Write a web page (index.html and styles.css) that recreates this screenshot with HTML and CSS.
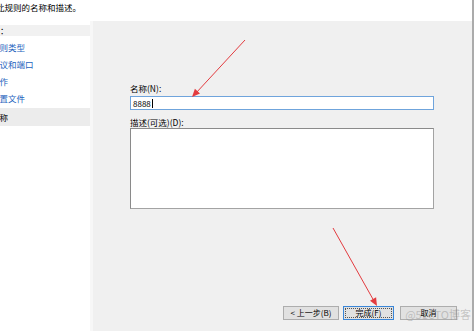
FILE: index.html
```html
<!DOCTYPE html>
<html lang="zh-CN">
<head>
<meta charset="utf-8">
<title>新建入站规则向导 - 名称</title>
<link rel="stylesheet" href="styles.css">
</head>
<body>
<div class="window">
  <div class="header"><span class="header-text">指定此规则的名称和描述。</span></div>
  <div class="main">
    <nav class="sidebar">
      <div class="steps-title">步骤：</div>
      <ul class="steps">
        <li class="step">规则类型</li>
        <li class="step">协议和端口</li>
        <li class="step">操作</li>
        <li class="step">配置文件</li>
        <li class="step current">名称</li>
      </ul>
    </nav>
    <section class="content">
      <div class="form">
        <div class="label">名称(N):</div>
        <div class="name-input"><span class="value">8888</span><span class="caret"></span></div>
        <div class="label label-desc">描述(可选)(D):</div>
        <div class="desc"></div>
      </div>
      <div class="footer">
        <button class="btn btn-back">&lt; 上一步(B)</button>
        <button class="btn btn-primary">完成(F)</button>
        <button class="btn btn-cancel">取消</button>
      </div>
    </section>
  </div>
</div>
<div class="edge"></div>
<span class="watermark">@51CTO博客</span>
<svg class="arrows" width="474" height="331" viewBox="0 0 474 331">
  <line x1="245" y1="40" x2="196" y2="93" stroke="#e33b3f" stroke-width="1"/>
  <polygon points="192,97 200,93.5 194.9,88.8" fill="#e33b3f"/>
  <line x1="333" y1="228" x2="374" y2="301" stroke="#e33b3f" stroke-width="1"/>
  <polygon points="377,306 370,300.8 376.1,297.3" fill="#e33b3f"/>
</svg>
</body>
</html>
```
FILE: styles.css
```css
* {
  box-sizing: border-box;
  margin: 0;
  padding: 0;
}

body {
  width: 474px;
  height: 331px;
  overflow: hidden;
  position: relative;
  display: flex;
  background: #f0f0f0;
  font-family: "Noto Sans CJK SC", "Noto Sans", sans-serif;
  font-size: 8.5px;
  color: #000000;
}

.window {
  width: 472px;
  height: 331px;
  display: flex;
  flex-direction: column;
}

.edge {
  width: 2px;
  height: 331px;
  background: #ababab;
}

.header {
  flex: none;
  height: 21px;
  background: #ffffff;
  padding-top: 2px;
  line-height: 11px;
  white-space: nowrap;
  overflow: hidden;
}

.header-text {
  display: block;
  text-indent: -21px;
}

.main {
  flex: 1;
  display: flex;
}

.sidebar {
  width: 93px;
  background: #ffffff;
  border-right: 3px solid #f7f7f7;
  padding-top: 4px;
}

.steps-title {
  height: 11px;
  line-height: 11px;
  background: #f1f1f1;
  text-indent: -17px;
  white-space: nowrap;
  overflow: hidden;
}

.steps {
  list-style: none;
  margin-top: 3px;
}

.step {
  height: 17px;
  line-height: 17px;
  color: #2463bd;
  text-indent: -9px;
  white-space: nowrap;
  overflow: hidden;
}

.step.current {
  color: #000000;
  background: #ececec;
  height: 18px;
  line-height: 18px;
  margin-top: 1px;
}

.content {
  flex: 1;
  display: flex;
  flex-direction: column;
}

.form {
  display: flex;
  flex-direction: column;
  padding: 61px 38px 0 37px;
}

.label {
  height: 12px;
  line-height: 12px;
}

.name-input {
  margin-top: 2px;
  height: 14px;
  border: 1px solid #6fa4dc;
  background: #ffffff;
  padding-left: 2px;
  display: flex;
  align-items: center;
  font-size: 8px;
}

.caret {
  width: 1px;
  height: 9px;
  background: #000000;
  margin-left: 1px;
}

.label-desc {
  margin-top: 6px;
}

.desc {
  height: 81px;
  background: #ffffff;
  border: 1px solid #a3a3a3;
  border-top-color: #8a8a8a;
  border-left-color: #8a8a8a;
}

.footer {
  margin-top: auto;
  display: flex;
  justify-content: flex-end;
  padding: 0 15px 11px 0;
}

.btn {
  height: 14px;
  border: 1px solid #adadad;
  background: #e1e1e1;
  font-family: inherit;
  font-size: 8px;
  line-height: 12px;
  color: #000000;
  text-align: center;
}

.btn-back {
  width: 56px;
  margin-right: 4px;
}

.btn-primary {
  width: 51px;
  margin-right: 6px;
  border-color: #3a86d8;
  outline: 1px dotted #555555;
  outline-offset: -3px;
}

.btn-cancel {
  width: 57px;
}

.watermark {
  position: absolute;
  right: 3px;
  bottom: 10px;
  font-family: "Noto Sans CJK SC", "Noto Sans", sans-serif;
  font-size: 11px;
  line-height: 14px;
  color: rgba(130, 130, 130, 0.4);
}

.arrows {
  position: absolute;
  left: 0;
  top: 0;
  pointer-events: none;
}
```
